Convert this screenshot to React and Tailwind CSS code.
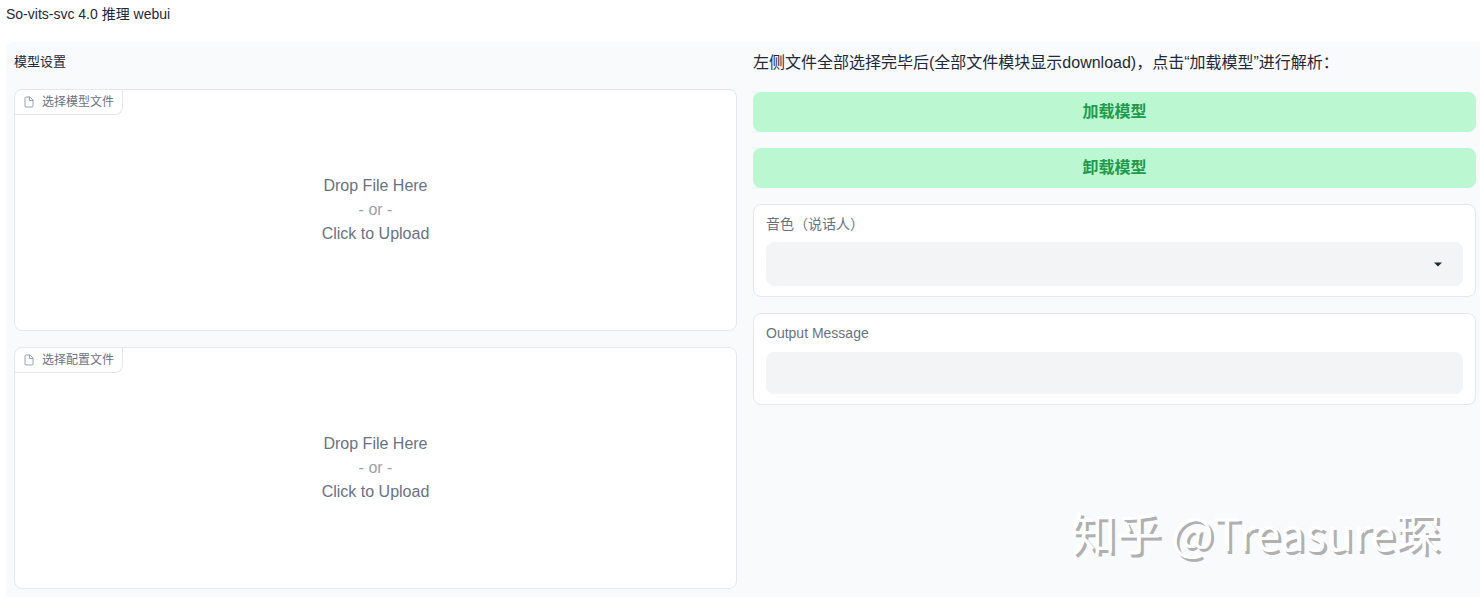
import React from 'react';

const FileIcon = ({ className }) => (
  <svg
    className={className}
    viewBox="0 0 24 24"
    fill="none"
    stroke="currentColor"
    strokeWidth="2"
    strokeLinecap="round"
    strokeLinejoin="round"
    aria-hidden="true"
  >
    <path d="M13 2H6a2 2 0 0 0-2 2v16a2 2 0 0 0 2 2h12a2 2 0 0 0 2-2V9z" />
    <polyline points="13 2 13 9 20 9" />
  </svg>
);

const FileDrop = ({ label }) => (
  <div className="flex h-[242px] flex-col items-start overflow-hidden rounded-lg border border-gray-200 bg-white">
    <div className="flex h-[25px] items-center gap-[7px] rounded-br-lg border-r border-b border-gray-200 px-2 text-xs text-gray-500">
      <FileIcon className="h-3 w-3 text-gray-400" />
      <span>{label}</span>
    </div>
    <button
      type="button"
      aria-label={`${label} Drop File Here - or - Click to Upload`}
      className="flex w-full flex-1 flex-col items-center justify-center pb-[26px] text-base text-gray-500"
    >
      <span>Drop File Here</span>
      <span className="text-gray-400">- or -</span>
      <span>Click to Upload</span>
    </button>
  </div>
);

const ModelButton = ({ children }) => (
  <button
    type="button"
    className="h-10 w-full rounded-lg bg-[#bbf7d0] text-base font-bold text-[#229a4e]"
  >
    {children}
  </button>
);

const App = () => {
  return (
    <div className="relative h-screen overflow-hidden bg-white pl-1.5 font-['Liberation_Sans','Noto_Sans_CJK_SC',sans-serif] text-gray-800">
      <h1 className="pt-1 text-sm">So-vits-svc 4.0 推理 webui</h1>

      <main className="mt-[18px] flex min-h-full gap-4 rounded-tl-lg bg-gray-50 py-2 pr-1 pl-2">
        <section className="flex min-w-0 flex-1 flex-col gap-4">
          <h2 className="text-[13px] leading-[23px]">模型设置</h2>
          <div className="flex flex-col gap-4">
            <FileDrop label="选择模型文件" />
            <FileDrop label="选择配置文件" />
          </div>
        </section>

        <section className="flex min-w-0 flex-1 flex-col gap-4">
          <p className="text-base leading-[26px]">
            左侧文件全部选择完毕后(全部文件模块显示download)，点击“加载模型”进行解析：
          </p>
          <ModelButton>加载模型</ModelButton>
          <ModelButton>卸载模型</ModelButton>

          <div className="rounded-lg border border-gray-200 bg-white px-3 pt-[9px] pb-2.5">
            <label htmlFor="speaker" className="block text-sm text-gray-500">
              音色（说话人）
            </label>
            <div className="relative mt-2">
              <select
                id="speaker"
                className="block h-11 w-full appearance-none rounded-lg bg-gray-100 px-3 text-sm"
              >
                <option value=""></option>
              </select>
              <svg
                className="pointer-events-none absolute top-5 right-[21px] h-[5px] w-2 text-gray-800"
                viewBox="0 0 8 5"
                fill="currentColor"
                aria-hidden="true"
              >
                <path d="M0 0.5h8L4 4.5z" />
              </svg>
            </div>
          </div>

          <div className="rounded-lg border border-gray-200 bg-white px-3 pt-[9px] pb-2.5">
            <label htmlFor="output" className="block text-sm text-gray-500">
              Output Message
            </label>
            <input
              id="output"
              type="text"
              readOnly
              className="mt-[9px] block h-[42px] w-full rounded-lg bg-gray-100 px-3 text-sm"
            />
          </div>
        </section>
      </main>

      <span className="pointer-events-none absolute right-10 bottom-[35px] font-['Noto_Sans_CJK_SC',sans-serif] text-[45px] leading-[60px] text-white [text-shadow:3px_3px_0_#b0b0b0]">
        知乎 @Treasure琛
      </span>
    </div>
  );
};

export default App;
